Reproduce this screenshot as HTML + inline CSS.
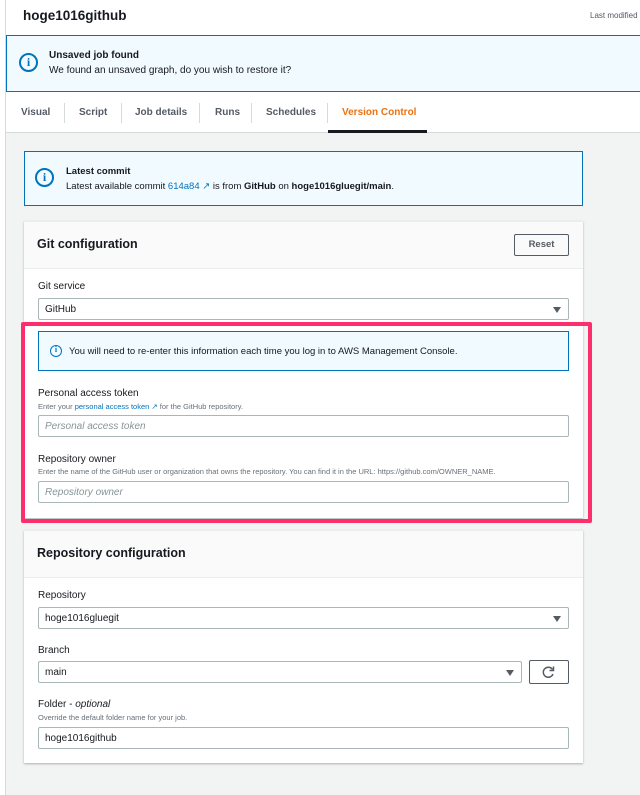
<!DOCTYPE html>
<html><head><meta charset="utf-8"><style>
*{box-sizing:border-box;margin:0;padding:0}
body{width:640px;height:795px;overflow:hidden;font-family:"Liberation Sans",sans-serif;color:#16191f;background:#f2f3f3;position:relative;font-size:10px}
.a{position:absolute}
.strip{left:0;top:0;width:6px;height:795px;background:#fff;border-right:1px solid #d5dbdb}
.top{left:6px;top:0;width:634px;height:133px;background:#fff;border-bottom:1px solid #d5dbdb}
.info{background:#f1faff;border:1px solid #0073bb}
.ic{border:2.5px solid #0073bb;border-radius:50%;color:#0073bb;font-weight:bold;text-align:center;font-family:"Liberation Serif",serif}
.b{font-weight:bold}
.tab{top:107px;font-size:10px;font-weight:bold;color:#545b64}
.sep{top:103px;width:1px;height:20px;background:#d5dbdb}
.card{left:24px;width:559px;background:#fff;box-shadow:0 1px 2px rgba(0,28,36,.3);border-top:1px solid #eaeded}
.hd{left:0;top:0;width:100%;height:47px;background:#fafafa;border-bottom:1px solid #eaeded}
.ht{left:13px;font-size:12.5px;font-weight:bold}
.lbl{font-size:10px}
.desc{font-size:7.5px;color:#687078}
.inp{height:22px;border:1px solid #aab7b8;border-radius:2px;background:#fff;font-size:10px;padding:5px 6px}
.ph{color:#879596;font-style:italic}
.arr{position:absolute;right:7px;top:8px;width:0;height:0;border-left:4px solid transparent;border-right:4px solid transparent;border-top:6px solid #545b64}
.lnk{color:#0073bb}
</style></head><body>
<div class="a strip"></div>
<div class="a top"></div>
<div class="a b" style="left:23px;top:8px;font-size:13.5px">hoge1016github</div>
<div class="a" style="left:590px;top:11px;font-size:8px;color:#545b64;white-space:nowrap">Last modified</div>

<div class="a info" style="left:6px;top:35px;width:640px;height:57px"></div>
<div class="a ic" style="left:19px;top:53px;width:19px;height:19px;font-size:12px;line-height:14px">i</div>
<div class="a b" style="left:49px;top:50px;font-size:10px">Unsaved job found</div>
<div class="a" style="left:49px;top:65px;font-size:10px">We found an unsaved graph, do you wish to restore it?</div>

<div class="a tab" style="left:21px">Visual</div><div class="a sep" style="left:64px"></div>
<div class="a tab" style="left:79px">Script</div><div class="a sep" style="left:121px"></div>
<div class="a tab" style="left:135px">Job details</div><div class="a sep" style="left:199px"></div>
<div class="a tab" style="left:215px">Runs</div><div class="a sep" style="left:251px"></div>
<div class="a tab" style="left:266px">Schedules</div><div class="a sep" style="left:327px"></div>
<div class="a tab" style="left:342px;color:#ec7211">Version Control</div>
<div class="a" style="left:328px;top:130px;width:99px;height:3px;background:#16191f"></div>

<div class="a info" style="left:24px;top:151px;width:559px;height:55px"></div>
<div class="a ic" style="left:35px;top:168px;width:19px;height:19px;font-size:12px;line-height:14px">i</div>
<div class="a b" style="left:66px;top:166px;font-size:9.5px">Latest commit</div>
<div class="a" style="left:66px;top:181px;font-size:9.5px;white-space:nowrap">Latest available commit <span class="lnk">614a84 ↗</span> is from <b>GitHub</b> on <b>hoge1016gluegit/main</b>.</div>

<div class="a card" style="top:221px;height:297px">
 <div class="a hd"></div>
 <div class="a ht" style="top:15px">Git configuration</div>
 <div class="a b" style="left:490px;top:12px;width:55px;height:22px;border:1px solid #545b64;border-radius:2px;font-size:9.5px;color:#545b64;text-align:center;line-height:20px">Reset</div>
 <div class="a lbl" style="left:14px;top:59px">Git service</div>
 <div class="a inp" style="left:14px;top:76px;width:531px">GitHub<span class="arr"></span></div>
 <div class="a info" style="left:14px;top:109px;width:531px;height:40px"></div>
 <div class="a ic" style="left:26px;top:123px;width:12px;height:12px;font-size:8px;line-height:8px;border-width:1.5px">i</div>
 <div class="a" style="left:45px;top:124px;font-size:9.5px;white-space:nowrap">You will need to re-enter this information each time you log in to AWS Management Console.</div>
 <div class="a lbl" style="left:14px;top:166px">Personal access token</div>
 <div class="a desc" style="left:14px;top:180px;white-space:nowrap">Enter your <span class="lnk">personal access token ↗</span> for the GitHub repository.</div>
 <div class="a inp ph" style="left:14px;top:193px;width:531px">Personal access token</div>
 <div class="a lbl" style="left:14px;top:232px">Repository owner</div>
 <div class="a desc" style="left:14px;top:245px;white-space:nowrap">Enter the name of the GitHub user or organization that owns the repository. You can find it in the URL: https://github.com/OWNER_NAME.</div>
 <div class="a inp ph" style="left:14px;top:259px;width:531px">Repository owner</div>
</div>

<div class="a" style="left:21px;top:322px;width:571px;height:201px;border:4px solid #fe2d6b;border-radius:2px"></div>

<div class="a card" style="top:530px;height:233px">
 <div class="a hd"></div>
 <div class="a ht" style="top:15px">Repository configuration</div>
 <div class="a lbl" style="left:14px;top:59px">Repository</div>
 <div class="a inp" style="left:14px;top:76px;width:531px">hoge1016gluegit<span class="arr"></span></div>
 <div class="a lbl" style="left:14px;top:114px">Branch</div>
 <div class="a inp" style="left:14px;top:130px;width:484px">main<span class="arr"></span></div>
 <div class="a" style="left:505px;top:129px;width:40px;height:24px;border:1px solid #545b64;border-radius:2px">
  <svg width="40" height="22" viewBox="0 0 40 22" style="position:absolute;left:-1px;top:0"><path d="M23.5 8.5 A5 5 0 1 0 24 13" fill="none" stroke="#545b64" stroke-width="1.5"/><path d="M24.5 5.5 L24.5 9.5 L20.5 9.5" fill="none" stroke="#545b64" stroke-width="1.5"/></svg>
 </div>
 <div class="a lbl" style="left:14px;top:168px">Folder - <i>optional</i></div>
 <div class="a desc" style="left:14px;top:182px">Override the default folder name for your job.</div>
 <div class="a inp" style="left:14px;top:196px;width:531px">hoge1016github</div>
</div>
</body></html>
